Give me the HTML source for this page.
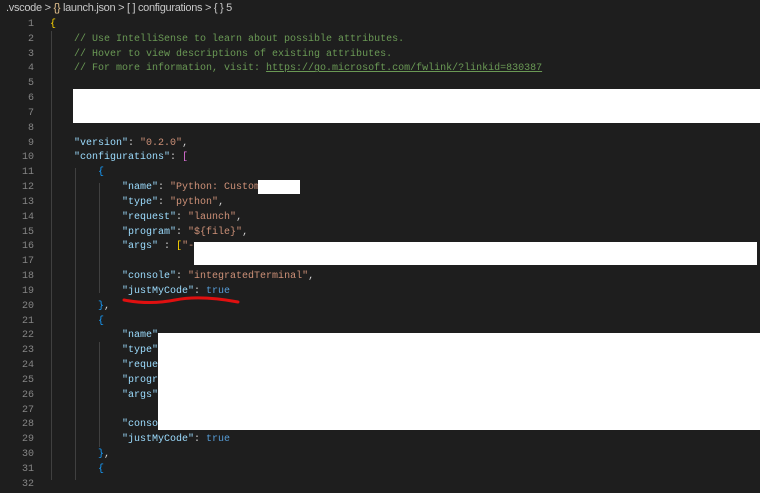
<!DOCTYPE html>
<html><head><style>
body{margin:0;width:760px;height:480px;background:#1e1e1e;overflow:hidden;position:relative;font-family:"Liberation Mono",monospace;}
.bc{position:absolute;top:2px;left:6px;font:11px "Liberation Sans",sans-serif;color:#c8c8c8;white-space:pre;letter-spacing:-0.3px}
.bc .y{color:#e2c08d}
.code{position:absolute;top:18px;left:0;width:760px;font-size:10px;line-height:14.83px;}
.r{height:14.83px;position:relative}
.n{position:absolute;left:0;width:34px;text-align:right;color:#858585}
.t{position:absolute;left:50px;color:#d4d4d4;white-space:pre}
.k{color:#9cdcfe}.s{color:#ce9178}.c{color:#6a9955}.b{color:#569cd6}.y{color:#ffd700}.p{color:#da70d6}.bl{color:#179fff}
.u{text-decoration:underline}
.w{position:absolute;background:#fff}
.g{position:absolute;width:1px;background:#404040}
</style></head><body>
<div class="bc">.vscode &gt; <span class="y">{}</span> launch.json &gt; [ ] configurations &gt; { } 5</div>
<div class="g" style="left:51px;top:31px;height:449px"></div>
<div class="g" style="left:75px;top:168px;height:312px"></div>
<div class="g" style="left:99px;top:183px;height:110px"></div>
<div class="g" style="left:99px;top:342px;height:105px"></div>
<div class="code"><div class="r"><span class="n">1</span><span class="t"><span class="y">{</span></span></div><div class="r"><span class="n">2</span><span class="t">    <span class="c">// Use IntelliSense to learn about possible attributes.</span></span></div><div class="r"><span class="n">3</span><span class="t">    <span class="c">// Hover to view descriptions of existing attributes.</span></span></div><div class="r"><span class="n">4</span><span class="t">    <span class="c">// For more information, visit: <span class="u">https://go.microsoft.com/fwlink/?linkid=830387</span></span></span></div><div class="r"><span class="n">5</span></div><div class="r"><span class="n">6</span></div><div class="r"><span class="n">7</span></div><div class="r"><span class="n">8</span></div><div class="r"><span class="n">9</span><span class="t">    <span class="k">"version"</span>: <span class="s">"0.2.0"</span>,</span></div><div class="r"><span class="n">10</span><span class="t">    <span class="k">"configurations"</span>: <span class="p">[</span></span></div><div class="r"><span class="n">11</span><span class="t">        <span class="bl">{</span></span></div><div class="r"><span class="n">12</span><span class="t">            <span class="k">"name"</span>: <span class="s">"Python: Custom     "</span>,</span></div><div class="r"><span class="n">13</span><span class="t">            <span class="k">"type"</span>: <span class="s">"python"</span>,</span></div><div class="r"><span class="n">14</span><span class="t">            <span class="k">"request"</span>: <span class="s">"launch"</span>,</span></div><div class="r"><span class="n">15</span><span class="t">            <span class="k">"program"</span>: <span class="s">"${file}"</span>,</span></div><div class="r"><span class="n">16</span><span class="t">            <span class="k">"args"</span> : <span class="y">[</span><span class="s">"-</span></span></div><div class="r"><span class="n">17</span></div><div class="r"><span class="n">18</span><span class="t">            <span class="k">"console"</span>: <span class="s">"integratedTerminal"</span>,</span></div><div class="r"><span class="n">19</span><span class="t">            <span class="k">"justMyCode"</span>: <span class="b">true</span></span></div><div class="r"><span class="n">20</span><span class="t">        <span class="bl">}</span>,</span></div><div class="r"><span class="n">21</span><span class="t">        <span class="bl">{</span></span></div><div class="r"><span class="n">22</span><span class="t">            <span class="k">"name"</span></span></div><div class="r"><span class="n">23</span><span class="t">            <span class="k">"type"</span></span></div><div class="r"><span class="n">24</span><span class="t">            <span class="k">"reque</span></span></div><div class="r"><span class="n">25</span><span class="t">            <span class="k">"progr</span></span></div><div class="r"><span class="n">26</span><span class="t">            <span class="k">"args"</span></span></div><div class="r"><span class="n">27</span></div><div class="r"><span class="n">28</span><span class="t">            <span class="k">"conso</span></span></div><div class="r"><span class="n">29</span><span class="t">            <span class="k">"justMyCode"</span>: <span class="b">true</span></span></div><div class="r"><span class="n">30</span><span class="t">        <span class="bl">}</span>,</span></div><div class="r"><span class="n">31</span><span class="t">        <span class="bl">{</span></span></div><div class="r"><span class="n">32</span></div></div>
<div class="w" style="left:73px;top:89px;width:687px;height:34px"></div>
<div class="w" style="left:258px;top:180px;width:42px;height:14px"></div>
<div class="w" style="left:194px;top:242px;width:563px;height:23px"></div>
<div class="w" style="left:158px;top:333px;width:602px;height:97px"></div>
<svg style="position:absolute;left:0;top:0" width="760" height="480"><path d="M124 300 Q150 305 175 300 Q200 295 238 302" stroke="#e01010" stroke-width="3" fill="none" stroke-linecap="round"/></svg>
</body></html>
